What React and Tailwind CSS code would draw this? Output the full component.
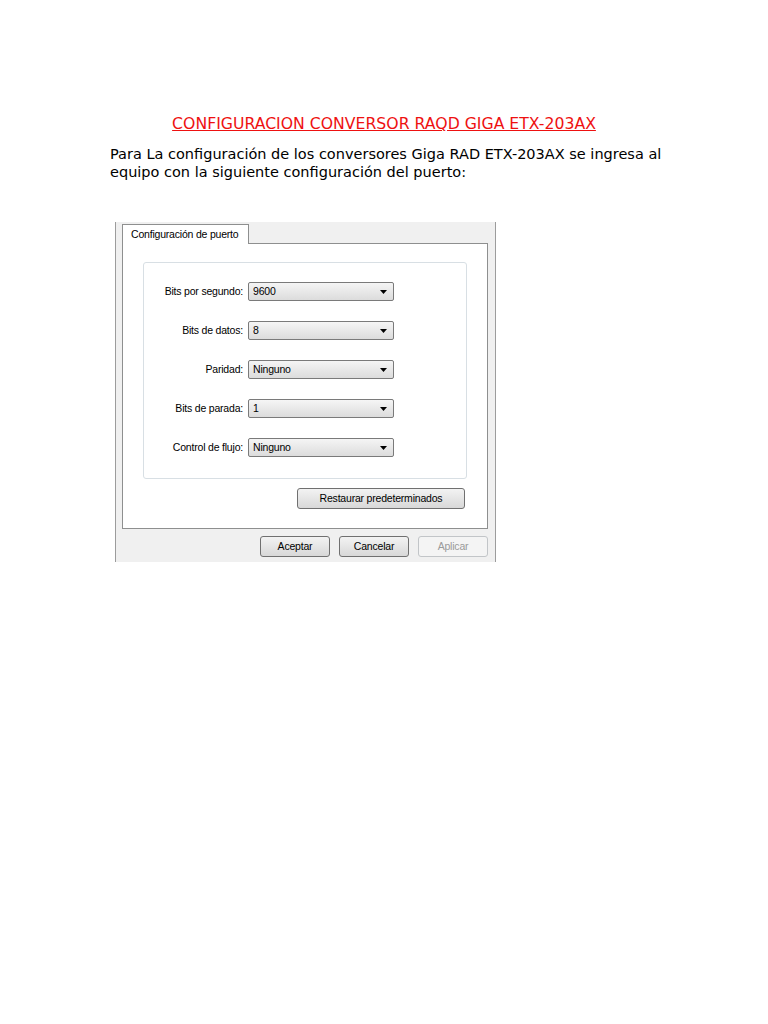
import React from "react";

// ajustes del puerto serie tal como aparecen en el diálogo
const portSettings = [
  { label: "Bits por segundo:", value: "9600" },
  { label: "Bits de datos:", value: "8" },
  { label: "Paridad:", value: "Ninguno" },
  { label: "Bits de parada:", value: "1" },
  { label: "Control de flujo:", value: "Ninguno" },
];

const uiFont = { fontFamily: "'Liberation Sans', Arial, sans-serif" };

function Combo({ value }) {
  return (
    <div className="flex h-[19px] w-[146px] items-center justify-between rounded-[2px] border border-[#7a7a7a] bg-gradient-to-b from-[#f5f5f5] to-[#dcdcdc] pl-[4px] pr-[6px] text-[10.5px] tracking-[-0.2px] text-black">
      <span>{value}</span>
      <svg width="7" height="4" viewBox="0 0 7 4">
        <path d="M0 0h7L3.5 4z" fill="#000" />
      </svg>
    </div>
  );
}

function WinButton({ children, disabled, className = "" }) {
  return (
    <div
      className={`flex h-[21px] items-center justify-center rounded-[3px] border text-[10.5px] tracking-[-0.2px] ${
        disabled
          ? "border-[#c2c5c8] bg-[#f4f4f4] text-[#9a9a9a]"
          : "border-[#707070] bg-gradient-to-b from-[#f3f3f3] to-[#d8d8d8] text-black"
      } ${className}`}
    >
      {children}
    </div>
  );
}

function PortDialog() {
  return (
    <div
      style={uiFont}
      className="ml-[115px] flex h-[340px] w-[381px] flex-col border-x border-[#9c9c9c] bg-[#f0f0f0] pl-[6px] pr-[7px] pt-[2px]"
    >
      {/* pestaña */}
      <div className="flex">
        <div className="relative z-10 -mb-px flex h-[20px] w-[127px] items-center whitespace-nowrap border border-b-0 border-[#8e8f8f] bg-white pl-[8px] text-[10.5px] tracking-[-0.2px] text-black">
          Configuración de puerto
        </div>
      </div>

      {/* panel de la pestaña */}
      <div className="flex h-[286px] flex-col border border-[#8e8f8f] bg-white px-[20px] pt-[18px]">
        <div className="flex h-[217px] flex-col gap-[20px] rounded-[3px] border border-[#d8dfe4] pt-[19px]">
          {portSettings.map((row) => (
            <div key={row.label} className="flex items-center">
              <div className="w-[104px] pr-[5px] text-right text-[10.5px] tracking-[-0.2px] text-black">
                {row.label}
              </div>
              <Combo value={row.value} />
            </div>
          ))}
        </div>
        <div className="mt-[9px] flex justify-end pr-[2px]">
          <WinButton className="w-[168px]">Restaurar predeterminados</WinButton>
        </div>
      </div>

      <div className="mt-[7px] flex justify-end gap-[9px]">
        <WinButton className="w-[70px]">Aceptar</WinButton>
        <WinButton className="w-[70px]">Cancelar</WinButton>
        <WinButton className="w-[70px]" disabled>
          Aplicar
        </WinButton>
      </div>
    </div>
  );
}

export default function App() {
  return (
    <div className="min-h-[1024px] w-[768px] bg-white" style={{ fontFamily: "'DejaVu Sans', sans-serif" }}>
      <div className="pt-[115px]">
        <h1 className="text-center text-[15.7px] leading-[18px] text-[#ee1111] underline">
          CONFIGURACION CONVERSOR RAQD GIGA ETX-203AX
        </h1>
        <p className="mt-[12px] w-[700px] pl-[110px] text-[14.5px] leading-[18px] text-black">
          Para La configuración de los conversores Giga RAD ETX-203AX se ingresa al
          <br />
          equipo con la siguiente configuración del puerto:
        </p>
      </div>
      <div className="mt-[41px]">
        <PortDialog />
      </div>
    </div>
  );
}
